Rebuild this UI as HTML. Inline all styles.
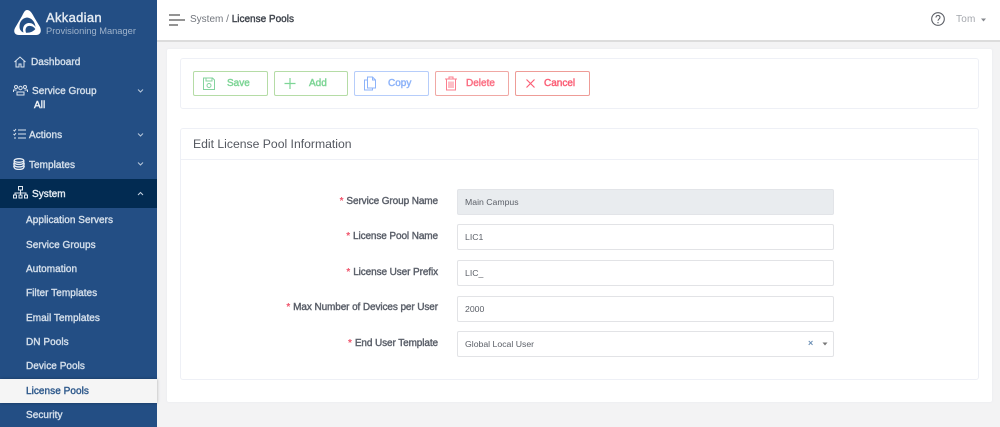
<!DOCTYPE html>
<html><head><meta charset="utf-8">
<style>
*{box-sizing:border-box;margin:0;padding:0}
html,body{width:1000px;height:427px;overflow:hidden;background:#f3f3f4;font-family:"Liberation Sans",sans-serif}
.abs,.t{position:absolute}
.t{white-space:nowrap}
.m{font-weight:normal;-webkit-text-stroke:.4px currentColor}
#side{position:absolute;left:0;top:0;width:157px;height:427px;background:#234e84}
.nav{position:absolute;color:#d3deea;font-size:10px;font-weight:normal;-webkit-text-stroke:.4px currentColor;white-space:nowrap;line-height:12px;letter-spacing:.05px}
.sub{left:26px}
.btn{position:absolute;top:71px;width:75px;height:25px;border-radius:2px;background:#fff;font-size:10px;font-weight:normal;-webkit-text-stroke:.45px currentColor;border:1px solid}
.btn span{position:absolute;top:6px;line-height:12px}
.btn svg{position:absolute;left:8px;top:4px;-webkit-text-stroke:0}
.lab{position:absolute;right:562px;font-size:10px;font-weight:normal;-webkit-text-stroke:.4px currentColor;color:#5a5f69;line-height:12px;white-space:nowrap;letter-spacing:-.1px}
.lab b{color:#f0556c;margin-right:3px;font-weight:bold;-webkit-text-stroke:0}
.inp{position:absolute;left:457px;width:377px;height:26px;border:1px solid #e2e3e6;border-radius:2px;background:#fff;font-size:8.7px;color:#5c6068;padding:6px 7px;line-height:12px}
svg{display:block}
</style></head><body>
<div class="abs" style="left:157px;top:0;width:843px;height:40px;background:#fff"></div>
<div class="abs" style="left:157px;top:40px;width:843px;height:2px;background:#dcdcdc"></div>
<div class="abs" style="left:167px;top:49px;width:825px;height:353px;background:#fff;border-radius:2px;box-shadow:0 0 2px #e6e8ee"></div>
<div class="abs" style="left:180px;top:58px;width:799px;height:51px;background:#fff;border:1px solid #eef0f6;border-radius:3px"></div>
<div class="abs" style="left:180px;top:128px;width:799px;height:252px;background:#fff;border:1px solid #eef0f6;border-radius:3px"></div>
<div class="abs" style="left:181px;top:159px;width:797px;height:1px;background:#eef0f6"></div>

<div id="side">
<svg class="abs" style="left:13px;top:9px" width="29" height="27" viewBox="0 0 29 27"><path fill="#fff" d="M14 1C17 1 19 4 21 8L27 18C29 23 27 26 23 26H6C2 26 0 23 2 19L9 7C11 3 12 1 14 1Z"/><path fill="#234e84" d="M14 8.500C9.500 9 6.500 12.500 6.500 17.500 6.500 20.500 8 22.500 10.500 23.500 9 19 11 14.500 15.500 14 19 13.800 21 15.500 22.500 18 22 13 19 9 14 8.500Z"/><path fill="#234e84" d="M13 23.700C17 24 20.500 22.500 22.300 20 20.500 17.500 18 16.500 15.500 17 13 17.500 11.800 20.500 13 23.700Z"/></svg>
<div class="t m" style="left:46px;top:11px;font-size:13px;color:#e2e9f1;line-height:14px;letter-spacing:.3px">Akkadian</div>
<div class="t" style="left:46px;top:25px;font-size:9.3px;color:#9fb3cb;line-height:12px">Provisioning Manager</div>

<svg class="abs" style="left:14px;top:56px" width="12" height="12" viewBox="0 0 12 12" fill="none" stroke="#dbe4ee" stroke-width="1"><path d="M.5 6 6 1l5.500 5M2 5v6h3V8h2v3h3V5"/></svg>
<div class="nav" style="left:31px;top:57px">Dashboard</div>

<svg class="abs" style="left:13px;top:84px" width="15" height="12" viewBox="0 0 15 12" fill="none" stroke="#dbe4ee" stroke-width="1"><circle cx="3" cy="3" r="1.500"/><circle cx="7.500" cy="4" r="1.700"/><circle cx="12" cy="3" r="1.500"/><path d="M.5 8V6h3M14.500 8V6h-3M4 11V8h7v3z"/></svg>
<div class="nav" style="left:32px;top:86px">Service Group</div>
<div class="nav" style="left:34px;top:100px;color:#f0f4f8">All</div>
<svg class="abs" style="left:137px;top:88px" width="7" height="6" viewBox="0 0 7 6" fill="none" stroke="#b9c8da" stroke-width="1"><path d="M1 1.500 3.500 4 6 1.500"/></svg>

<svg class="abs" style="left:13px;top:128px" width="13" height="12" viewBox="0 0 13 12" fill="none" stroke="#dbe4ee" stroke-width="1"><path d="M5 2h8M5 6h8M5 10h8M.5 2l1 1 1.500-2M.5 6l1 1 1.500-2M1 10h2"/></svg>
<div class="nav" style="left:29px;top:130px">Actions</div>
<svg class="abs" style="left:137px;top:132px" width="7" height="6" viewBox="0 0 7 6" fill="none" stroke="#b9c8da" stroke-width="1"><path d="M1 1.500 3.500 4 6 1.500"/></svg>

<svg class="abs" style="left:13px;top:158px" width="12" height="12" viewBox="0 0 12 12" fill="none" stroke="#e6ecf3" stroke-width="1.300"><ellipse cx="6" cy="2.500" rx="4.800" ry="1.800"/><path d="M1.200 2.500v2c1 2.600 8.600 2.600 9.600 0v-2M1.200 5c-1 1 0 1.500 0 2 1 2.600 8.600 2.600 9.600 0 0-.5 1-1 0-2M1.200 7.500c-1 1 0 1.500 0 2 1 2.600 8.600 2.600 9.600 0 0-.5 1-1 0-2"/></svg>
<div class="nav" style="left:29px;top:160px">Templates</div>
<svg class="abs" style="left:137px;top:161px" width="7" height="6" viewBox="0 0 7 6" fill="none" stroke="#b9c8da" stroke-width="1"><path d="M1 1.500 3.500 4 6 1.500"/></svg>

<div class="abs" style="left:0;top:179px;width:157px;height:29px;background:#022b52"></div>
<svg class="abs" style="left:13px;top:186px" width="15" height="13" viewBox="0 0 15 13" fill="none" stroke="#e2e9f1" stroke-width="1"><rect x="5.500" y=".5" width="4" height="3.500"/><path d="M7.500 4v3M2 9V7h11v2M7.500 7v2"/><rect x=".5" y="9" width="3" height="3"/><rect x="6" y="9" width="3" height="3"/><rect x="11.500" y="9" width="3" height="3"/></svg>
<div class="nav" style="left:32px;top:189px;color:#e2e9f1">System</div>
<svg class="abs" style="left:137px;top:191px" width="7" height="6" viewBox="0 0 7 6" fill="none" stroke="#c5d2e0" stroke-width="1"><path d="M1 4 3.500 1.500 6 4"/></svg>

<div class="nav sub" style="top:215px">Application Servers</div>
<div class="nav sub" style="top:240px">Service Groups</div>
<div class="nav sub" style="top:264px">Automation</div>
<div class="nav sub" style="top:288px">Filter Templates</div>
<div class="nav sub" style="top:313px">Email Templates</div>
<div class="nav sub" style="top:337px">DN Pools</div>
<div class="nav sub" style="top:361px">Device Pools</div>
<div class="abs" style="left:0;top:379px;width:157px;height:24px;background:#f5f5f5;box-shadow:0 0 3px rgba(0,0,0,.3)"></div>
<div class="nav sub" style="top:386px;color:#2f5a8c">License Pools</div>
<div class="nav sub" style="top:410px">Security</div>
</div>

<svg class="abs" style="left:169px;top:14px" width="16" height="12" viewBox="0 0 16 12" fill="none" stroke="#555" stroke-width="1.200"><path d="M0 1h11M0 6h16M0 11h9"/></svg>
<div class="t" style="left:190px;top:14px;font-size:10px;line-height:12px;color:#73777e">System / <span class="m" style="color:#3f444c">License Pools</span></div>

<svg class="abs" style="left:931px;top:12px" width="14" height="14" viewBox="0 0 14 14" fill="none" stroke="#5c5f66" stroke-width="1.100"><circle cx="7" cy="7" r="6.300"/><path d="M5 5.500C5 2.800 9 2.900 9 5.300 9 7 7 7 7 8.800M7 10v1.200"/></svg>
<div class="t" style="left:956px;top:14px;font-size:10px;line-height:12px;color:#a4a7ad;letter-spacing:.2px">Tom</div>
<svg class="abs" style="left:981px;top:18px" width="5" height="4"><path d="M0 .5h5L2.500 3.500z" fill="#85888e"/></svg>

<div class="btn" style="left:193px;border-color:#b5dca6"><svg width="14" height="15" viewBox="0 0 14 15" fill="none" stroke="#84d39e" stroke-width="1"><path d="M1.500 2h9l2 2v9.500h-11zM4 2v3h6V2"/><circle cx="7" cy="9.500" r="2"/></svg><span style="left:33px;color:#7ed596">Save</span></div>
<div class="btn" style="left:274px;width:74px;border-color:#b5dca6"><svg width="14" height="15" viewBox="0 0 14 15" fill="none" stroke="#7ed596" stroke-width="1.200"><path d="M7 2v11M1.500 7.500h11"/></svg><span style="left:34px;color:#7ed596">Add</span></div>
<div class="btn" style="left:354px;border-color:#b6cdfa"><svg width="14" height="15" viewBox="0 0 14 15" fill="none" stroke="#8db3f9" stroke-width="1"><path d="M4.500 1h5l3 3v8h-8zM9.500 1v3h3M4.500 4H1.500v10h8v-2"/></svg><span style="left:33px;color:#8db3f9">Copy</span></div>
<div class="btn" style="left:435px;width:74px;border-color:#f0a8a4"><svg width="14" height="15" viewBox="0 0 14 15" fill="none" stroke="#fb7e8e" stroke-width="1"><path d="M1 3h12M5 3V1h4v2M2.500 3v11h9V3M5 5.500v6.500M7 5.500v6.500M9 5.500v6.500"/></svg><span style="left:30px;color:#fb6f83">Delete</span></div>
<div class="btn" style="left:515px;border-color:#ee9c97"><svg width="14" height="15" viewBox="0 0 14 15" fill="none" stroke="#fb5f76" stroke-width="1.200"><path d="M2.500 3.500l8 8M10.500 3.500l-8 8"/></svg><span style="left:28px;color:#fb5f76">Cancel</span></div>

<div class="t" style="left:193px;top:137px;font-size:12.2px;line-height:15px;color:#545860">Edit License Pool Information</div>

<div class="lab" style="top:196px"><b>*</b>Service Group Name</div>
<div class="lab" style="top:231px"><b>*</b>License Pool Name</div>
<div class="lab" style="top:267px"><b>*</b>License User Prefix</div>
<div class="lab" style="top:302px"><b>*</b>Max Number of Devices per User</div>
<div class="lab" style="top:338px"><b>*</b>End User Template</div>

<div class="inp" style="top:189px;background:#e9ecef;border-color:#e2e4e8">Main Campus</div>
<div class="inp" style="top:224px">LIC1</div>
<div class="inp" style="top:260px">LIC_</div>
<div class="inp" style="top:296px">2000</div>
<div class="inp" style="top:331px">Global Local User</div>
<div class="t" style="left:808px;top:338px;font-size:9px;line-height:11px;color:#6b8fb5;font-weight:bold">×</div>
<svg class="abs" style="left:822px;top:342px" width="6" height="4"><path d="M.5 .5h5L3 3.500z" fill="#777"/></svg>
</body></html>
